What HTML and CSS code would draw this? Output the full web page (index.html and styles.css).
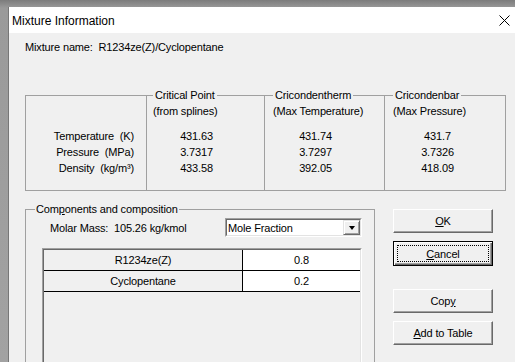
FILE: index.html
```html
<!DOCTYPE html>
<html lang="en">
<head>
  <meta charset="UTF-8">
  <meta name="viewport" content="width=device-width, initial-scale=1.0">
  <title>Mixture Information</title>
  <link rel="stylesheet" href="styles.css">
</head>
<body>
  <div class="window">
    <!-- title bar -->
    <div class="titlebar">
      <span class="title">Mixture Information</span>
      <svg class="close" width="11" height="11" viewBox="0 0 11 11">
        <path d="M0.5 0.5 L10.5 10.5 M10.5 0.5 L0.5 10.5" stroke="#000" stroke-width="1" fill="none"/>
      </svg>
    </div>

    <div class="client">
      <div class="mixture-name">Mixture name:  R1234ze(Z)/Cyclopentane</div>

      <!-- critical point / cricondentherm / cricondenbar -->
      <div class="props">
        <div class="prop-col labels">
          <div class="prop-head"></div>
          <div class="prop-row">Temperature  (K)</div>
          <div class="prop-row">Pressure  (MPa)</div>
          <div class="prop-row">Density  (kg/m³)</div>
        </div>
        <div class="prop-col group first">
          <div class="prop-head">
            <span class="group-title">Critical Point</span>
            <span class="group-sub">(from splines)</span>
          </div>
          <div class="prop-row">431.63</div>
          <div class="prop-row">3.7317</div>
          <div class="prop-row">433.58</div>
        </div>
        <div class="prop-col group">
          <div class="prop-head">
            <span class="group-title">Cricondentherm</span>
            <span class="group-sub">(Max Temperature)</span>
          </div>
          <div class="prop-row">431.74</div>
          <div class="prop-row">3.7297</div>
          <div class="prop-row">392.05</div>
        </div>
        <div class="prop-col group last">
          <div class="prop-head">
            <span class="group-title">Cricondenbar</span>
            <span class="group-sub">(Max Pressure)</span>
          </div>
          <div class="prop-row">431.7</div>
          <div class="prop-row">3.7326</div>
          <div class="prop-row">418.09</div>
        </div>
      </div>

      <div class="lower">
        <!-- components -->
        <div class="groupbox">
          <span class="group-title">Com<u>p</u>onents and composition</span>
          <div class="molar-row">
            <span class="molar">Molar Mass:  105.26 kg/kmol</span>
            <div class="combo">
              <div class="combo-inner">
                <span class="combo-text">Mole Fraction</span>
                <span class="combo-btn"><span class="arrow"></span></span>
              </div>
            </div>
          </div>
          <div class="grid">
            <div class="grid-inner">
              <div class="grid-row">
                <div class="cell name">R1234ze(Z)</div>
                <div class="cell val">0.8</div>
              </div>
              <div class="grid-row">
                <div class="cell name">Cyclopentane</div>
                <div class="cell val">0.2</div>
              </div>
            </div>
          </div>
        </div>

        <!-- buttons -->
        <div class="buttons">
          <div class="btn"><u>O</u>K</div>
          <div class="btn default"><u>C</u>ancel</div>
          <div class="btn copy">Cop<u>y</u></div>
          <div class="btn"><u>A</u>dd to Table</div>
        </div>
      </div>
    </div>
  </div>
</body>
</html>
```

FILE: styles.css
```css
html, body {
  height: 100%;
}

body {
  margin: 0;
  overflow: hidden;
  background: linear-gradient(to bottom, #7c7c7c 0, #9a9a9a 8px, #a2a2a2 100%);
  font-family: "Liberation Sans", Arial, sans-serif;
  font-size: 11px;
  letter-spacing: -0.15px;
  color: #000;
}

.window {
  margin: 7px 0 0 8px;
  height: calc(100% - 7px);
  background: #f0f0f0;
  border-left: 1px solid #777;
}

.titlebar {
  height: 26px;
  background: #fff;
  display: flex;
  align-items: center;
  justify-content: space-between;
  padding: 0 5px 0 3px;
}

.title {
  font-size: 12px;
  letter-spacing: 0;
  padding-top: 1px;
}

.close {
  display: block;
  margin-top: 1px;
}

.client {
  padding: 8px 0 0 16px;
}

.mixture-name {
  line-height: 13px;
  white-space: pre;
}

/* property box */
.props {
  display: flex;
  width: 481px;
  height: 96px;
  box-sizing: border-box;
  margin-top: 41px;
  border: 1px solid #a0a0a0;
}

.prop-col {
  display: flex;
  flex-direction: column;
  box-sizing: border-box;
}

.labels {
  width: 120px;
  text-align: right;
  padding-right: 12px;
}

.group {
  width: 120px;
  border-left: 1px solid #a0a0a0;
  text-align: center;
  padding-right: 18px;
}

.group.first {
  width: 118px;
}

.group.last {
  width: 121px;
  padding-right: 15px;
}

.prop-head {
  height: 32px;
  display: flex;
  flex-direction: column;
  align-items: flex-start;
  padding-left: 8px;
  text-align: left;
}

.group.first .prop-head {
  padding-left: 6px;
}

.group-title {
  margin-top: -7px;
  padding: 0 2px 0 2px;
  line-height: 13px;
  background: #f0f0f0;
  white-space: nowrap;
}

.group-sub {
  margin-top: 3px;
  line-height: 13px;
  white-space: nowrap;
}

.prop-row {
  line-height: 16px;
  white-space: pre;
}

/* lower part */
.lower {
  display: flex;
  margin-top: 18px;
}

.groupbox {
  width: 350px;
  height: 200px;
  box-sizing: border-box;
  border: 1px solid #a0a0a0;
  display: flex;
  flex-direction: column;
}

.groupbox .group-title {
  align-self: flex-start;
  margin-left: 9px;
  padding: 0 1px;
}

.molar-row {
  display: flex;
  align-items: center;
  justify-content: space-between;
  margin-top: 2px;
  padding: 0 12px 0 24px;
}

.molar {
  white-space: pre;
}

.combo {
  width: 137px;
  height: 19px;
  box-sizing: border-box;
  border: 1px solid;
  border-color: #a0a0a0 #fff #fff #a0a0a0;
}

.combo-inner {
  height: 100%;
  box-sizing: border-box;
  border: 1px solid;
  border-color: #696969 #e3e3e3 #e3e3e3 #696969;
  background: #fff;
  display: flex;
  align-items: center;
  justify-content: space-between;
}

.combo-text {
  padding-left: 1px;
}

.combo-btn {
  width: 17px;
  height: 15px;
  box-sizing: border-box;
  background: #f0f0f0;
  border: 1px solid;
  border-color: #e3e3e3 #696969 #696969 #e3e3e3;
  box-shadow: inset 1px 1px #fff, inset -1px -1px #a0a0a0;
  display: flex;
  align-items: center;
  justify-content: center;
}

.arrow {
  width: 0;
  height: 0;
  border-left: 3.5px solid transparent;
  border-right: 3.5px solid transparent;
  border-top: 4px solid #000;
  margin-top: 1px;
}

.grid {
  margin: 11px 12px 0 16px;
  border: 1px solid;
  border-color: #a0a0a0 #fff #fff #a0a0a0;
}

.grid-inner {
  height: 140px;
  border: 1px solid;
  border-color: #696969 #e3e3e3 #e3e3e3 #696969;
  background: #f0f0f0;
}

.grid-row {
  display: flex;
  height: 21px;
  box-sizing: border-box;
  border-bottom: 1px solid #000;
}

.cell {
  display: flex;
  align-items: center;
  justify-content: center;
}

.cell.name {
  width: 199px;
  box-sizing: border-box;
  border-right: 1px solid #000;
  background: #f0f0f0;
}

.cell.val {
  flex: 1;
  background: #fff;
}

/* buttons */
.buttons {
  display: flex;
  flex-direction: column;
  gap: 8px;
  width: 100px;
  margin-left: 18px;
}

.btn {
  height: 24px;
  box-sizing: border-box;
  display: flex;
  align-items: center;
  justify-content: center;
  background: #f0f0f0;
  border: 1px solid;
  border-color: #fff #696969 #696969 #fff;
  box-shadow: inset -1px -1px #a0a0a0;
}

.btn.default {
  height: 25px;
  border-color: #000;
  box-shadow: inset 1px 1px #fff, inset -1px -1px #696969, inset -2px -2px #a0a0a0;
  outline: 1px dotted #000;
  outline-offset: -5px;
}

.btn.copy {
  margin-top: 15px;
}
```
